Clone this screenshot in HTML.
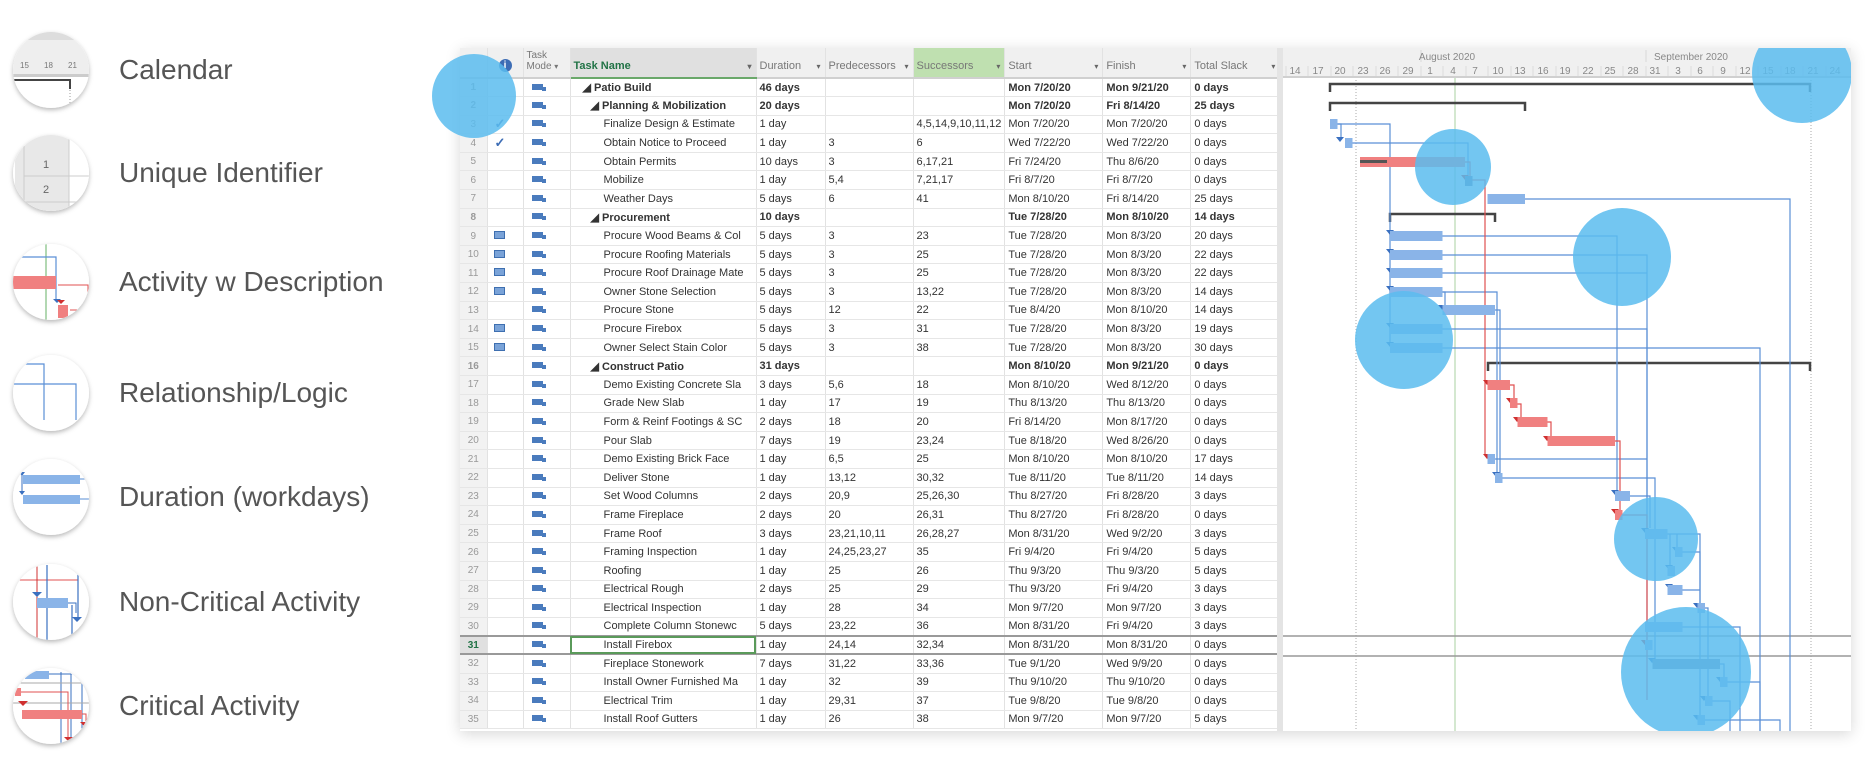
<!DOCTYPE html>
<html><head><meta charset="utf-8"><style>
*{margin:0;padding:0;box-sizing:border-box}
body{width:1875px;height:780px;background:#fff;position:relative;overflow:hidden;font-family:"Liberation Sans",sans-serif}
.lbl{position:absolute;left:119px;font-size:28px;color:#555;line-height:34px;white-space:nowrap}
.card{position:absolute;left:460px;top:48px;width:1391px;height:683px;box-shadow:0 3px 14px rgba(0,0,0,.16);background:#fff}
table{position:absolute;left:460px;top:48px;border-collapse:collapse;table-layout:fixed;font-size:11px;color:#333}
td,th{border-right:1px solid #e2e2e2;border-bottom:1px solid #e6e6e6;height:18.6px;padding:0 3px;white-space:nowrap;overflow:hidden;text-align:left;font-weight:normal}
th{height:30px;background:#f0f0f0;color:#777;font-size:11px;vertical-align:bottom;padding-bottom:5px;border-bottom:2px solid #d0d0d0;position:relative}
th .a{position:absolute;right:4px;bottom:6px;font-size:8px;color:#666}
td.n{background:#f2f2f2;color:#999;text-align:center;font-size:10px}
tr.b td{font-weight:bold}
.m{display:inline-block;width:11px;height:6px;background:#4a7bbd;position:relative;top:-1px;margin-left:5px}
.m:after{content:"";position:absolute;right:-3px;top:3px;width:4px;height:4px;background:#4a7bbd}
.ck{color:#3d6db5;font-weight:bold;font-size:13px;padding-left:4px}
.cal{display:inline-block;width:11px;height:8px;background:#7aa3d8;border:1px solid #3e6fb0;margin-left:3px}
.i1{padding-left:12px}.i2{padding-left:20px}.i3{padding-left:33px}
</style></head><body>

<svg width="460" height="780" style="position:absolute;left:0;top:0">
<defs>
<filter id="sh" x="-30%" y="-30%" width="160%" height="160%"><feDropShadow dx="0" dy="2" stdDeviation="2.5" flood-color="#000" flood-opacity=".28"/></filter>
<clipPath id="c1"><circle cx="51" cy="70" r="38"/></clipPath>
<clipPath id="c2"><circle cx="51" cy="173" r="38"/></clipPath>
<clipPath id="c3"><circle cx="51" cy="282" r="38"/></clipPath>
<clipPath id="c4"><circle cx="51" cy="393" r="38"/></clipPath>
<clipPath id="c5"><circle cx="51" cy="497" r="38"/></clipPath>
<clipPath id="c6"><circle cx="51" cy="602" r="38"/></clipPath>
<clipPath id="c7"><circle cx="51" cy="706" r="38"/></clipPath>
</defs>
<g fill="#fff" filter="url(#sh)">
<circle cx="51" cy="70" r="38"/><circle cx="51" cy="173" r="38"/><circle cx="51" cy="282" r="38"/><circle cx="51" cy="393" r="38"/><circle cx="51" cy="497" r="38"/><circle cx="51" cy="602" r="38"/><circle cx="51" cy="706" r="38"/>
</g>
<g clip-path="url(#c1)">
<rect x="0" y="30" width="100" height="10" fill="#ddd"/><rect x="0" y="40" width="100" height="34" fill="#eee"/>
<text x="20" y="68" font-size="8" fill="#777">15</text><text x="44" y="68" font-size="8" fill="#777">18</text><text x="68" y="68" font-size="8" fill="#777">21</text>
<rect x="0" y="74" width="100" height="3" fill="#ccc"/>
<path d="M10 80H70V89" stroke="#444" stroke-width="2" fill="none"/><path d="M70 90V110" stroke="#999" stroke-dasharray="1 2"/>
</g>
<g clip-path="url(#c2)">
<rect x="15" y="130" width="54" height="90" fill="#e8e8e8"/><rect x="69" y="130" width="30" height="90" fill="#fff"/>
<path d="M24 130V220M69 130V220M24 176H99M24 202H99" stroke="#ccc"/>
<text x="43" y="168" font-size="11" fill="#666">1</text><text x="43" y="193" font-size="11" fill="#666">2</text><text x="43" y="219" font-size="11" fill="#666">3</text>
</g>
<g clip-path="url(#c3)">
<path d="M46 240V330" stroke="#9c9" stroke-width="1.5"/>
<path d="M10 257H56V300" stroke="#5a8fd6" fill="none" stroke-width="1.2"/>
<rect x="10" y="276" width="46" height="13" fill="#f08080"/>
<path d="M58 285H88V310H70" stroke="#e05050" fill="none"/>
<rect x="58" y="305" width="10" height="13" fill="#f08080"/><path d="M53 299h8l-4 4z" fill="#3a70c0"/><path d="M57 300h8l-4 4z" fill="#d03030"/>
</g>
<g clip-path="url(#c4)">
<path d="M10 364H44V420M10 384H76V420M44 364V420" stroke="#5a8fd6" fill="none" stroke-width="1.2"/>
</g>
<g clip-path="url(#c5)">
<path d="M22 470V492" stroke="#3a70c0"/><path d="M19 472h6l-3 4zM19 491h6l-3 4z" fill="#3a70c0"/>
<rect x="23" y="475" width="57" height="9" fill="#8ab4e8"/><rect x="23" y="495" width="57" height="9" fill="#8ab4e8"/>
<path d="M80 479h10M80 499h10" stroke="#5a8fd6"/>
</g>
<g clip-path="url(#c6)">
<path d="M10 580H78V605" stroke="#e05050" fill="none"/><path d="M37 565V640" stroke="#d03030"/><path d="M47 565V640M78 570V620M72 605V640" stroke="#3a70c0" stroke-width="1.2"/>
<path d="M32 592h10l-5 5z" fill="#3a70c0"/><rect x="37" y="598" width="31" height="10" fill="#8ab4e8"/>
<path d="M68 603h8v10" stroke="#3a70c0" fill="none"/><path d="M72 617h10l-5 5z" fill="#3a70c0"/>
</g>
<g clip-path="url(#c7)">
<rect x="25" y="671" width="24" height="8" fill="#8ab4e8"/><path d="M49 674H90M61 672V750M71 672V750M82 672V750" stroke="#3a70c0"/>
<path d="M10 683H95M10 703H95" stroke="#aaa"/><rect x="15" y="688" width="6" height="8" fill="#f08080"/>
<path d="M21 692H68V740" stroke="#e05050" fill="none"/><path d="M18 701h10l-5 5z" fill="#d03030"/>
<rect x="22" y="710" width="60" height="9" fill="#f08080"/><path d="M82 714h4v22" stroke="#e05050" fill="none"/>
<path d="M64 737h9l-4 5zM80 722h8l-4 4z" fill="#d03030"/>
</g>
</svg>
<div class="lbl" style="top:53px">Calendar</div>
<div class="lbl" style="top:156px">Unique Identifier</div>
<div class="lbl" style="top:265px">Activity w Description</div>
<div class="lbl" style="top:376px">Relationship/Logic</div>
<div class="lbl" style="top:480px">Duration (workdays)</div>
<div class="lbl" style="top:585px">Non-Critical Activity</div>
<div class="lbl" style="top:689px">Critical Activity</div>

<div class="card"></div>
<table>
<colgroup><col style="width:27px"><col style="width:36px"><col style="width:47px"><col style="width:186px"><col style="width:69px"><col style="width:88px"><col style="width:89px"><col style="width:98px"><col style="width:88px"><col style="width:89px"></colgroup>
<tr><th></th><th style="text-align:center"><span style="display:inline-block;width:13px;height:13px;border-radius:50%;background:#3d6db5;color:#fff;font-size:10px;font-weight:bold;line-height:13px;text-align:center">i</span></th><th style="font-size:10px;line-height:11px">Task<br>Mode <span style="font-size:8px">▾</span></th><th style="color:#217346;font-weight:bold;background:#e0e0e0;border-bottom:2px solid #6aa86a">Task Name<span class="a">▾</span></th><th>Duration<span class="a">▾</span></th><th>Predecessors<span class="a">▾</span></th><th style="background:#bfe0b0">Successors<span class="a">▾</span></th><th>Start<span class="a">▾</span></th><th>Finish<span class="a">▾</span></th><th>Total Slack<span class="a">▾</span></th></tr>
<tr class="b"><td class="n">1</td><td></td><td><span class="m"></span></td><td class="i1">◢ Patio Build</td><td>46 days</td><td></td><td></td><td>Mon 7/20/20</td><td>Mon 9/21/20</td><td>0 days</td></tr>
<tr class="b"><td class="n">2</td><td></td><td><span class="m"></span></td><td class="i2">◢ Planning &amp; Mobilization</td><td>20 days</td><td></td><td></td><td>Mon 7/20/20</td><td>Fri 8/14/20</td><td>25 days</td></tr>
<tr><td class="n">3</td><td><span class="ck">✓</span></td><td><span class="m"></span></td><td class="i3">Finalize Design &amp; Estimate</td><td>1 day</td><td></td><td>4,5,14,9,10,11,12</td><td>Mon 7/20/20</td><td>Mon 7/20/20</td><td>0 days</td></tr>
<tr><td class="n">4</td><td><span class="ck">✓</span></td><td><span class="m"></span></td><td class="i3">Obtain Notice to Proceed</td><td>1 day</td><td>3</td><td>6</td><td>Wed 7/22/20</td><td>Wed 7/22/20</td><td>0 days</td></tr>
<tr><td class="n">5</td><td></td><td><span class="m"></span></td><td class="i3">Obtain Permits</td><td>10 days</td><td>3</td><td>6,17,21</td><td>Fri 7/24/20</td><td>Thu 8/6/20</td><td>0 days</td></tr>
<tr><td class="n">6</td><td></td><td><span class="m"></span></td><td class="i3">Mobilize</td><td>1 day</td><td>5,4</td><td>7,21,17</td><td>Fri 8/7/20</td><td>Fri 8/7/20</td><td>0 days</td></tr>
<tr><td class="n">7</td><td></td><td><span class="m"></span></td><td class="i3">Weather Days</td><td>5 days</td><td>6</td><td>41</td><td>Mon 8/10/20</td><td>Fri 8/14/20</td><td>25 days</td></tr>
<tr class="b"><td class="n">8</td><td></td><td><span class="m"></span></td><td class="i2">◢ Procurement</td><td>10 days</td><td></td><td></td><td>Tue 7/28/20</td><td>Mon 8/10/20</td><td>14 days</td></tr>
<tr><td class="n">9</td><td><span class="cal"></span></td><td><span class="m"></span></td><td class="i3">Procure Wood Beams &amp; Col</td><td>5 days</td><td>3</td><td>23</td><td>Tue 7/28/20</td><td>Mon 8/3/20</td><td>20 days</td></tr>
<tr><td class="n">10</td><td><span class="cal"></span></td><td><span class="m"></span></td><td class="i3">Procure Roofing Materials</td><td>5 days</td><td>3</td><td>25</td><td>Tue 7/28/20</td><td>Mon 8/3/20</td><td>22 days</td></tr>
<tr><td class="n">11</td><td><span class="cal"></span></td><td><span class="m"></span></td><td class="i3">Procure Roof Drainage Mate</td><td>5 days</td><td>3</td><td>25</td><td>Tue 7/28/20</td><td>Mon 8/3/20</td><td>22 days</td></tr>
<tr><td class="n">12</td><td><span class="cal"></span></td><td><span class="m"></span></td><td class="i3">Owner Stone Selection</td><td>5 days</td><td>3</td><td>13,22</td><td>Tue 7/28/20</td><td>Mon 8/3/20</td><td>14 days</td></tr>
<tr><td class="n">13</td><td></td><td><span class="m"></span></td><td class="i3">Procure Stone</td><td>5 days</td><td>12</td><td>22</td><td>Tue 8/4/20</td><td>Mon 8/10/20</td><td>14 days</td></tr>
<tr><td class="n">14</td><td><span class="cal"></span></td><td><span class="m"></span></td><td class="i3">Procure Firebox</td><td>5 days</td><td>3</td><td>31</td><td>Tue 7/28/20</td><td>Mon 8/3/20</td><td>19 days</td></tr>
<tr><td class="n">15</td><td><span class="cal"></span></td><td><span class="m"></span></td><td class="i3">Owner Select Stain Color</td><td>5 days</td><td>3</td><td>38</td><td>Tue 7/28/20</td><td>Mon 8/3/20</td><td>30 days</td></tr>
<tr class="b"><td class="n">16</td><td></td><td><span class="m"></span></td><td class="i2">◢ Construct Patio</td><td>31 days</td><td></td><td></td><td>Mon 8/10/20</td><td>Mon 9/21/20</td><td>0 days</td></tr>
<tr><td class="n">17</td><td></td><td><span class="m"></span></td><td class="i3">Demo Existing Concrete Sla</td><td>3 days</td><td>5,6</td><td>18</td><td>Mon 8/10/20</td><td>Wed 8/12/20</td><td>0 days</td></tr>
<tr><td class="n">18</td><td></td><td><span class="m"></span></td><td class="i3">Grade New Slab</td><td>1 day</td><td>17</td><td>19</td><td>Thu 8/13/20</td><td>Thu 8/13/20</td><td>0 days</td></tr>
<tr><td class="n">19</td><td></td><td><span class="m"></span></td><td class="i3">Form &amp; Reinf Footings &amp; SC</td><td>2 days</td><td>18</td><td>20</td><td>Fri 8/14/20</td><td>Mon 8/17/20</td><td>0 days</td></tr>
<tr><td class="n">20</td><td></td><td><span class="m"></span></td><td class="i3">Pour Slab</td><td>7 days</td><td>19</td><td>23,24</td><td>Tue 8/18/20</td><td>Wed 8/26/20</td><td>0 days</td></tr>
<tr><td class="n">21</td><td></td><td><span class="m"></span></td><td class="i3">Demo Existing Brick Face</td><td>1 day</td><td>6,5</td><td>25</td><td>Mon 8/10/20</td><td>Mon 8/10/20</td><td>17 days</td></tr>
<tr><td class="n">22</td><td></td><td><span class="m"></span></td><td class="i3">Deliver Stone</td><td>1 day</td><td>13,12</td><td>30,32</td><td>Tue 8/11/20</td><td>Tue 8/11/20</td><td>14 days</td></tr>
<tr><td class="n">23</td><td></td><td><span class="m"></span></td><td class="i3">Set Wood Columns</td><td>2 days</td><td>20,9</td><td>25,26,30</td><td>Thu 8/27/20</td><td>Fri 8/28/20</td><td>3 days</td></tr>
<tr><td class="n">24</td><td></td><td><span class="m"></span></td><td class="i3">Frame Fireplace</td><td>2 days</td><td>20</td><td>26,31</td><td>Thu 8/27/20</td><td>Fri 8/28/20</td><td>0 days</td></tr>
<tr><td class="n">25</td><td></td><td><span class="m"></span></td><td class="i3">Frame Roof</td><td>3 days</td><td>23,21,10,11</td><td>26,28,27</td><td>Mon 8/31/20</td><td>Wed 9/2/20</td><td>3 days</td></tr>
<tr><td class="n">26</td><td></td><td><span class="m"></span></td><td class="i3">Framing Inspection</td><td>1 day</td><td>24,25,23,27</td><td>35</td><td>Fri 9/4/20</td><td>Fri 9/4/20</td><td>5 days</td></tr>
<tr><td class="n">27</td><td></td><td><span class="m"></span></td><td class="i3">Roofing</td><td>1 day</td><td>25</td><td>26</td><td>Thu 9/3/20</td><td>Thu 9/3/20</td><td>5 days</td></tr>
<tr><td class="n">28</td><td></td><td><span class="m"></span></td><td class="i3">Electrical Rough</td><td>2 days</td><td>25</td><td>29</td><td>Thu 9/3/20</td><td>Fri 9/4/20</td><td>3 days</td></tr>
<tr><td class="n">29</td><td></td><td><span class="m"></span></td><td class="i3">Electrical Inspection</td><td>1 day</td><td>28</td><td>34</td><td>Mon 9/7/20</td><td>Mon 9/7/20</td><td>3 days</td></tr>
<tr><td class="n">30</td><td></td><td><span class="m"></span></td><td class="i3">Complete Column Stonewc</td><td>5 days</td><td>23,22</td><td>36</td><td>Mon 8/31/20</td><td>Fri 9/4/20</td><td>3 days</td></tr>
<tr style="border-top:2px solid #999;border-bottom:2px solid #999"><td class="n" style="color:#217346;background:#e0e0e0;font-weight:bold">31</td><td></td><td><span class="m"></span></td><td class="i3" style="outline:2px solid #5a9a5a;outline-offset:-2px">Install Firebox</td><td>1 day</td><td>24,14</td><td>32,34</td><td>Mon 8/31/20</td><td>Mon 8/31/20</td><td>0 days</td></tr>
<tr><td class="n">32</td><td></td><td><span class="m"></span></td><td class="i3">Fireplace Stonework</td><td>7 days</td><td>31,22</td><td>33,36</td><td>Tue 9/1/20</td><td>Wed 9/9/20</td><td>0 days</td></tr>
<tr><td class="n">33</td><td></td><td><span class="m"></span></td><td class="i3">Install Owner Furnished Ma</td><td>1 day</td><td>32</td><td>39</td><td>Thu 9/10/20</td><td>Thu 9/10/20</td><td>0 days</td></tr>
<tr><td class="n">34</td><td></td><td><span class="m"></span></td><td class="i3">Electrical Trim</td><td>1 day</td><td>29,31</td><td>37</td><td>Tue 9/8/20</td><td>Tue 9/8/20</td><td>0 days</td></tr>
<tr><td class="n">35</td><td></td><td><span class="m"></span></td><td class="i3">Install Roof Gutters</td><td>1 day</td><td>26</td><td>38</td><td>Mon 9/7/20</td><td>Mon 9/7/20</td><td>5 days</td></tr>
</table>

<svg style="position:absolute;left:1277px;top:48px" width="574" height="683" viewBox="1277 48 574 683" font-family="Liberation Sans, sans-serif">
<rect x="1277" y="48" width="6" height="683" fill="#e4e4e4"/>
<rect x="1283" y="48" width="568" height="30" fill="#f0f0f0"/>
<path d="M1283 77H1851" stroke="#d0d0d0" stroke-width="2"/>
<path d="M1421 50V62M1646 50V62" stroke="#d8d8d8"/>
<text x="1447" y="60" font-size="10" fill="#888" text-anchor="middle">August 2020</text>
<text x="1691" y="60" font-size="10" fill="#888" text-anchor="middle">September 2020</text>
<g font-size="10" fill="#888" text-anchor="middle">
<text x="1295" y="74">14</text><text x="1318" y="74">17</text><text x="1340" y="74">20</text><text x="1363" y="74">23</text><text x="1385" y="74">26</text><text x="1408" y="74">29</text><text x="1430" y="74">1</text><text x="1453" y="74">4</text><text x="1475" y="74">7</text><text x="1498" y="74">10</text><text x="1520" y="74">13</text><text x="1543" y="74">16</text><text x="1565" y="74">19</text><text x="1588" y="74">22</text><text x="1610" y="74">25</text><text x="1633" y="74">28</text><text x="1655" y="74">31</text><text x="1678" y="74">3</text><text x="1700" y="74">6</text><text x="1723" y="74">9</text><text x="1745" y="74">12</text><text x="1768" y="74">15</text><text x="1790" y="74">18</text><text x="1813" y="74">21</text><text x="1835" y="74">24</text>
</g>
<path d="M1286 66v10M1308 66v10M1331 66v10M1353 66v10M1376 66v10M1398 66v10M1421 66v10M1443 66v10M1466 66v10M1488 66v10M1511 66v10M1533 66v10M1556 66v10M1578 66v10M1601 66v10M1623 66v10M1646 66v10M1668 66v10M1691 66v10M1713 66v10M1736 66v10M1758 66v10M1781 66v10M1803 66v10M1826 66v10" stroke="#dcdcdc"/>
<path d="M1356 80V731M1811 80V731" stroke="#aaa" stroke-dasharray="1 2"/>
<path d="M1455 78V731" stroke="#a8d0a0"/>
<path d="M1283 636H1851M1283 656H1851" stroke="#999" stroke-width="1.5"/>
<!-- summaries -->
<g stroke="#444" stroke-width="2.5" fill="none">
<path d="M1330 92V84H1810V92"/><path d="M1330 111V103H1525V111"/><path d="M1390 222V214H1495V222"/><path d="M1488 371V363H1810V371"/>
</g>
<!-- connectors blue -->
<g stroke="#5a8fd6" stroke-width="1.2" fill="none">
<path d="M1337 124H1341V138"/><path d="M1337 124H1390V345"/><path d="M1352 143H1468V175"/>
<path d="M1525 199H1790V731"/>
<path d="M1442 236H1617V490"/><path d="M1442 255H1647V528"/><path d="M1442 273H1647"/>
<path d="M1442 292H1445V305"/><path d="M1442 292H1497V473"/><path d="M1495 310H1500V473"/>
<path d="M1442 329H1647V640"/><path d="M1442 348H1760V731"/>
<path d="M1495 459H1647"/><path d="M1502 478H1655V658"/>
<path d="M1630 496H1650V528"/><path d="M1667 534H1670V566M1667 534H1677V548M1667 534H1700V604"/>
<path d="M1682 552H1700V715"/><path d="M1675 590H1700"/><path d="M1705 608H1708V697"/>
<path d="M1682 627H1740V731"/><path d="M1720 664H1724V678"/><path d="M1727 682H1760V731"/>
<path d="M1712 701H1730V731"/><path d="M1705 720H1780V731"/>
</g>
<!-- connectors red -->
<g stroke="#e05050" stroke-width="1.2" fill="none">
<path d="M1465 162H1470V176"/><path d="M1472 180H1485V455"/>
<path d="M1510 385H1514V398"/><path d="M1517 404H1521V417"/><path d="M1547 422H1551V436"/>
<path d="M1615 441H1620V510"/><path d="M1622 515H1647V700"/>
</g>
<!-- arrows -->
<g fill="#3a70c0">
<path d="M1336 137h8l-4 5zM1386 230h8l-4 5zM1386 249h8l-4 5zM1386 268h8l-4 5zM1386 286h8l-4 5zM1386 323h8l-4 5zM1386 342h8l-4 5zM1438 305h8l-4 5zM1492 472h8l-4 5zM1611 490h8l-4 5zM1641 528h8l-4 5zM1665 565h8l-4 5zM1665 584h8l-4 5zM1672 547h8l-4 5zM1693 603h8l-4 5zM1641 640h8l-4 5zM1648 658h8l-4 5zM1716 677h8l-4 5zM1700 696h8l-4 5zM1693 715h8l-4 5z"/>
</g>
<g fill="#d03030">
<path d="M1461 175h8l-4 5zM1483 380h8l-4 5zM1506 398h8l-4 5zM1513 417h8l-4 5zM1543 436h8l-4 5zM1483 454h8l-4 5zM1611 509h8l-4 5zM1641 640h8l-4 5z"/>
</g>
<!-- bars -->
<g fill="#8ab4e8">
<rect x="1330" y="119" width="7.5" height="10"/><rect x="1345" y="138" width="7.5" height="10"/>
<rect x="1487.5" y="194" width="37.5" height="10"/>
<rect x="1390" y="231" width="52.5" height="10"/><rect x="1390" y="250" width="52.5" height="10"/><rect x="1390" y="268" width="52.5" height="10"/><rect x="1390" y="287" width="52.5" height="10"/>
<rect x="1442.5" y="305" width="52.5" height="10"/><rect x="1390" y="324" width="52.5" height="10"/><rect x="1390" y="343" width="52.5" height="10"/>
<rect x="1487.5" y="454" width="7.5" height="10"/><rect x="1495" y="473" width="7.5" height="10"/>
<rect x="1615" y="491" width="15" height="10"/><rect x="1645" y="529" width="22.5" height="10"/>
<rect x="1675" y="547" width="7.5" height="10"/><rect x="1667.5" y="566" width="7.5" height="10"/><rect x="1667.5" y="585" width="15" height="10"/>
<rect x="1697.5" y="603" width="7.5" height="10"/><rect x="1645" y="622" width="37.5" height="10"/><rect x="1645" y="640" width="7.5" height="10"/>
<rect x="1720" y="677" width="7.5" height="10"/><rect x="1705" y="696" width="7.5" height="10"/><rect x="1697.5" y="715" width="7.5" height="10"/>
</g>
<rect x="1652.5" y="659" width="67.5" height="10" fill="#7c8fb0"/>
<g fill="#f08080">
<rect x="1360" y="157" width="105" height="10"/><rect x="1487.5" y="380" width="22.5" height="10"/><rect x="1510" y="398" width="7.5" height="10"/>
<rect x="1517.5" y="417" width="30" height="10"/><rect x="1547.5" y="436" width="67.5" height="10"/><rect x="1615" y="510" width="7.5" height="10"/>
</g>
<rect x="1360" y="160" width="27" height="3" fill="#555"/>
<rect x="1465" y="176" width="7.5" height="10" fill="#6a7fa8"/>
<!-- highlight circles -->
<g fill="#5bbcee" fill-opacity=".85">
<circle cx="1453" cy="167" r="38"/><circle cx="1622" cy="257" r="49"/><circle cx="1404" cy="340" r="49"/><circle cx="1656" cy="539" r="42"/><circle cx="1686" cy="672" r="65"/><circle cx="1802" cy="73" r="50"/>
</g>
</svg>
<svg width="100" height="100" style="position:absolute;left:424px;top:48px" viewBox="424 48 100 100"><circle cx="474" cy="96" r="42" fill="#5bbcee" fill-opacity=".85"/></svg>
</body></html>
